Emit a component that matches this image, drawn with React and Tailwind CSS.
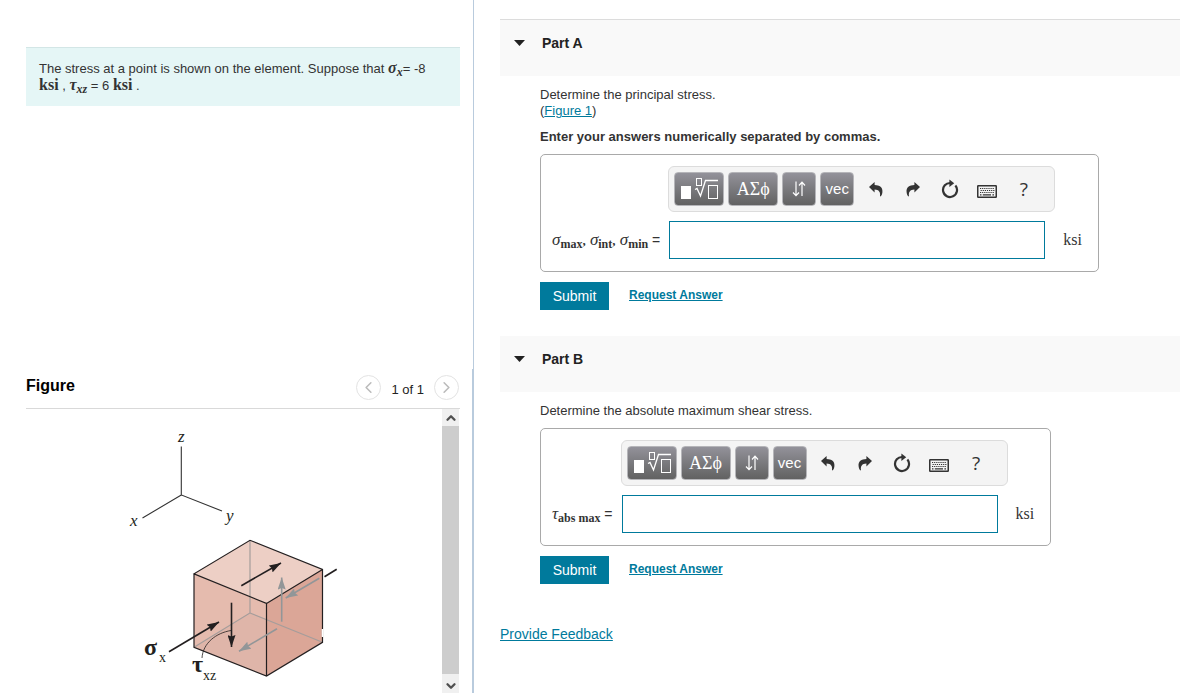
import { ChevronLeft, ChevronRight, ChevronUp, ChevronDown } from 'lucide-react'

const UndoIcon = ({ className = '' }) => (
  <svg viewBox="0 0 14 15" className={`h-[15px] w-[14px] ${className}`} fill="#333" aria-hidden="true">
    <path d="M0 5 L5.6 0 V3 C10.6 3.2 14 5.4 13.4 10.2 C13.2 12 12.6 13.4 11.8 14.4 L11 14 C11.6 10 10 7.6 5.6 7.4 V10.4 Z" />
  </svg>
)

const ResetIcon = () => (
  <svg viewBox="0 0 18 20" className="h-5 w-[18px]" aria-hidden="true">
    <path d="M14.4 6.5 A7 7 0 1 1 9.5 4" fill="none" stroke="#333" strokeWidth="2.2" />
    <path d="M8.4 0.4 L13.2 4.2 L8.4 8 Z" fill="#333" />
  </svg>
)

const KeyboardIcon = () => (
  <svg viewBox="0 0 20 13" className="h-[13px] w-5" aria-hidden="true">
    <rect x="0.75" y="0.75" width="18.5" height="11.5" rx="0.5" fill="none" stroke="#333" strokeWidth="1.5" />
    <path d="M3 3.5 H17.5 M3.6 5.5 H17.5 M3 7.5 H17.5" stroke="#333" strokeWidth="1.2" strokeDasharray="1.2 0.9" />
    <path d="M3 9.8 H4.5 M5.8 9.8 H14 M15.4 9.8 H17" stroke="#333" strokeWidth="1.2" />
  </svg>
)

const TemplateIcon = () => (
  <svg viewBox="0 0 38 22" className="h-[22px] w-[38px]" fill="none" stroke="#fff" aria-hidden="true">
    <rect x="1" y="8" width="10" height="13" fill="#fff" stroke="none" />
    <rect x="16.5" y="0.5" width="5" height="7" strokeWidth="1" />
    <path d="M15 11.5 L17 10.5 L20.5 18 L25.5 2.5 H38" strokeWidth="1.3" />
    <rect x="28.5" y="7.5" width="9" height="13" strokeWidth="1" />
  </svg>
)

const ArrowsIcon = () => (
  <svg viewBox="0 0 14 16" className="h-4 w-[14px]" fill="none" stroke="#fff" strokeWidth="1.2" aria-hidden="true">
    <path d="M4 0.5 V14.5 M1 11.5 L4 14.7 L7 11.5 M10 15 V1.5 M7 4.5 L10 1.2 L13 4.5" />
  </svg>
)

const DarkButton = ({ label, wide, children }) => (
  <button
    aria-label={label}
    className={`flex h-[34px] items-center justify-center rounded-[4px] border border-[#b5b5b9] bg-linear-to-b from-[#93929a] to-[#626262] text-white ${wide ? 'w-[50px]' : 'w-[34px]'}`}
  >
    {children}
  </button>
)

const IconButton = ({ label, children }) => (
  <button aria-label={label} className="flex h-[34px] w-[37px] items-center justify-center text-[#333]">
    {children}
  </button>
)

const Toolbar = () => (
  <div className="flex h-[46px] w-[387px] items-center rounded-[6px] border border-[#dcdcdc] bg-[#f4f4f4] pl-[5px]">
    <div className="flex gap-1">
      <DarkButton label="Templates" wide><TemplateIcon /></DarkButton>
      <DarkButton label="Greek symbols" wide>
        <span className="font-['Liberation_Serif',serif] text-[18px] leading-5">ΑΣϕ</span>
      </DarkButton>
      <DarkButton label="Sub and superscripts"><ArrowsIcon /></DarkButton>
      <DarkButton label="Vector">
        <span className="text-[15px] leading-5">vec</span>
      </DarkButton>
    </div>
    <div className="ml-[3px] flex">
      <IconButton label="Undo"><UndoIcon /></IconButton>
      <IconButton label="Redo"><UndoIcon className="-scale-x-100" /></IconButton>
      <IconButton label="Reset"><ResetIcon /></IconButton>
      <IconButton label="Keyboard shortcuts">
        <span className="pt-1"><KeyboardIcon /></span>
      </IconButton>
      <IconButton label="Help">
        <span className="font-['Open_Sans','Noto_Sans',sans-serif] text-[19px] leading-5 font-medium">?</span>
      </IconButton>
    </div>
  </div>
)

const MathSymbol = ({ symbol, sub }) => (
  <>
    <i className="text-[17px]">{symbol}</i>
    <span className="relative top-[3px] text-[12px] font-bold">{sub}</span>
  </>
)

const AnswerBox = ({ id, children }) => (
  <>
    <div className="grid w-max grid-cols-[auto_auto_auto] items-center gap-y-[9px] rounded-[5px] border border-[#a9a9a9] pt-[11px] pr-4 pb-3 pl-[11px]">
      <div className="col-start-2 row-start-1"><Toolbar /></div>
      <label htmlFor={id} className="col-start-1 row-start-2 pr-2 font-['Liberation_Serif',serif] leading-5 whitespace-nowrap">
        {children}
        <span className="font-['Liberation_Sans',sans-serif] text-[14px]"> =</span>
      </label>
      <input id={id} type="text" className="col-start-2 row-start-2 ml-px h-[38px] w-[376px] border border-[#007a9c] bg-white px-2 outline-none" />
      <span className="col-start-3 row-start-2 ml-2 font-['Liberation_Serif',serif] text-[16px] leading-5">ksi</span>
    </div>
    <div className="mt-[10px] flex items-center gap-5">
      <button className="h-7 w-[69px] bg-[#007a9c] text-[14px] text-white">Submit</button>
      <a href="#answer" className="pb-[2px] text-[12px] leading-4 font-bold text-[#007a9c] underline">Request Answer</a>
    </div>
  </>
)

const PartHeader = ({ title }) => (
  <h2 className="flex h-14 items-start bg-[#f9f9f9] pt-[13px] text-[14px] leading-5 font-bold text-[#222]">
    <button aria-label={`Toggle ${title}`} className="flex h-5 w-[42px] items-center pl-[14px]">
      <svg viewBox="0 0 11 6" className="h-[6px] w-[11px]" fill="#222"><path d="M0 0 H11 L5.5 6 Z" /></svg>
    </button>
    {title}
  </h2>
)

const StressElement = () => (
  <svg viewBox="26 409 416 284" className="h-[284px] w-[416px] shrink-0" role="img" aria-label="Stress element">
    <defs>
      <marker id="dark" viewBox="0 0 12 8" refX="12" refY="4" markerWidth="12" markerHeight="8" markerUnits="userSpaceOnUse" orient="auto">
        <path d="M0 0 L12 4 L0 8 L1.5 4 Z" fill="#231f20" />
      </marker>
      <marker id="light" viewBox="0 0 12 8" refX="12" refY="4" markerWidth="12" markerHeight="8" markerUnits="userSpaceOnUse" orient="auto">
        <path d="M0 0 L12 4 L0 8 L1.5 4 Z" fill="#929698" />
      </marker>
    </defs>

    {/* axes */}
    <path d="M181.3 446.5 V495 L222 511 M181.3 495 L142.5 518" fill="none" stroke="#333" strokeWidth="1.1" />
    <g fontFamily="Liberation Serif, serif" fontSize="17" fontStyle="italic" fill="#231f20">
      <text x="178" y="442">z</text>
      <text x="130" y="526">x</text>
      <text x="226" y="521">y</text>
    </g>

    {/* faces */}
    <path d="M250 540.3 L322.5 569.5 L266.5 603.5 L194 573.8 Z" fill="#edcfc5" />
    <path d="M194 573.8 L266.5 603.5 V676 L194 647.3 Z" fill="#e5bbae" />
    <path d="M266.5 603.5 L322.5 569.5 V642.3 L266.5 676 Z" fill="#dba697" />
    <path d="M194 647.3 L250 613 L266.5 619.6 V676 Z" fill="#dfb5a9" />

    {/* hidden edges */}
    <path d="M250 540.3 V613 L194 647.3 M250 613 L322.5 642.3" fill="none" stroke="#a59d9b" strokeWidth="1.2" />
    <path d="M194 573.8 V647.3 L266.5 676 L322.5 642.3 V569.5 L250 540.3 L194 573.8 L266.5 603.5 V676 M266.5 603.5 L322.5 569.5" fill="none" stroke="#231f20" strokeWidth="1.2" />
    <path d="M322.5 629 V637" stroke="#fff" strokeWidth="1.6" />

    <g stroke="#929698" strokeWidth="1.6" fill="none">
      <path d="M281.7 621.7 V577.5" markerEnd="url(#light)" />
      <path d="M319.3 578.3 L285.7 598" markerEnd="url(#light)" />
      <path d="M277 628.7 L239 651.3" markerEnd="url(#light)" />
    </g>
    <g stroke="#231f20" strokeWidth="1.6" fill="none">
      <path d="M241.3 585.7 L281 563" markerEnd="url(#dark)" />
      <path d="M231.5 602.7 V647" markerEnd="url(#dark)" />
      <path d="M169 651.7 L219 622" markerEnd="url(#dark)" />
      <path d="M324.5 576.7 L336.7 569.3" />
      <path d="M202 658 C203 643 216 633 231 630.5" strokeWidth="0.8" />
    </g>

    <g fontFamily="Liberation Serif, serif" fill="#231f20">
      <text x="144" y="655" fontSize="24" fontWeight="bold">σ</text>
      <text x="159" y="662" fontSize="14">x</text>
      <text x="192" y="672" fontSize="24" fontWeight="bold">τ</text>
      <text x="203" y="680" fontSize="14">xz</text>
    </g>
  </svg>
)

const FigurePanel = () => (
  <section className="flex h-[324px] flex-col border-r-2 border-[#b9cbdd] pr-3 pl-[26px]">
    <header className="flex h-10 items-center justify-between border-b border-[#d9d9d9] pr-px">
      <h2 className="pb-[6px] text-[16px] leading-5 font-bold text-black">Figure</h2>
      <div className="flex items-center gap-[10px] pb-[2px] text-[13px] text-[#222]">
        <button aria-label="Previous figure" className="flex size-[25px] items-center justify-center rounded-full border border-[#e3e3e3] text-[#bbb]">
          <ChevronLeft className="size-[19px]" />
        </button>
        <span className="pt-1 leading-4">1 of 1</span>
        <button aria-label="Next figure" className="flex size-[25px] items-center justify-center rounded-full border border-[#e3e3e3] text-[#bbb]">
          <ChevronRight className="size-[19px]" />
        </button>
      </div>
    </header>
    <div className="flex min-h-0 flex-1 justify-between overflow-hidden pr-px">
      <StressElement />
      <div className="flex w-[17px] shrink-0 flex-col bg-[#f0f0f0] text-[#505050]">
        <button aria-label="Scroll up" className="flex h-[17px] items-center justify-center">
          <ChevronUp className="size-[14px]" strokeWidth={4} />
        </button>
        <div className="flex-1 bg-[#cdcdcd]" />
        <button aria-label="Scroll down" className="flex h-[19px] items-end justify-center">
          <ChevronDown className="size-[14px]" strokeWidth={4} />
        </button>
      </div>
    </div>
  </section>
)

const App = () => {
  return (
    <div className="flex min-h-screen bg-white font-['Liberation_Sans',Arial,sans-serif] text-[13px] leading-4 text-[#333]">
      <aside className="flex w-[calc(40%+2px)] shrink-0 flex-col">
        <div className="flex-1 border-r border-[#b9cbdd] pt-[47px] pr-[13px] pl-[26px]">
          <p className="border-t border-[#d3e6e6] bg-[#e5f6f6] px-[13px] py-3">
            The stress at a point is shown on the element. Suppose that{' '}
            <span className="font-['Liberation_Serif',serif] leading-none font-bold italic">
              <span className="text-[16px]">σ</span>
              <span className="relative top-[3px] text-[12px]">x</span>
            </span>
            = -8{' '}
            <span className="font-['Liberation_Serif',serif] text-[16px] leading-none font-bold">ksi</span> ,{' '}
            <span className="font-['Liberation_Serif',serif] leading-none font-bold italic">
              <span className="text-[16px]">τ</span>
              <span className="relative top-[3px] text-[12px]">xz</span>
            </span>{' '}
            = 6 <span className="font-['Liberation_Serif',serif] text-[16px] leading-none font-bold">ksi</span> .
          </p>
        </div>
        <FigurePanel />
      </aside>

      <main className="min-w-0 flex-1 pt-[19px] pl-[26px]">
        <section className="border-t border-[#dcdcdc]">
          <PartHeader title="Part A" />
          <div className="pt-[11px] pl-10">
            <p>Determine the principal stress.</p>
            <p>(<a href="#figure" className="text-[#007a9c] underline">Figure 1</a>)</p>
            <p className="mt-[10px] mb-[9px] font-bold">Enter your answers numerically separated by commas.</p>
            <AnswerBox id="principal">
              <MathSymbol symbol="σ" sub="max" />
              <b className="pr-px">, </b>
              <MathSymbol symbol="σ" sub="int" />
              <b className="pr-px">, </b>
              <MathSymbol symbol="σ" sub="min" />
            </AnswerBox>
          </div>
        </section>

        <section className="mt-[26px]">
          <PartHeader title="Part B" />
          <div className="pt-[11px] pl-10">
            <p className="mb-[9px]">Determine the absolute maximum shear stress.</p>
            <AnswerBox id="shear">
              <MathSymbol symbol="τ" sub="abs max" />
            </AnswerBox>
          </div>
        </section>

        <a href="#feedback" className="mt-10 inline-block text-[14px] leading-5 text-[#007a9c] underline">Provide Feedback</a>
      </main>
    </div>
  )
}

export default App
